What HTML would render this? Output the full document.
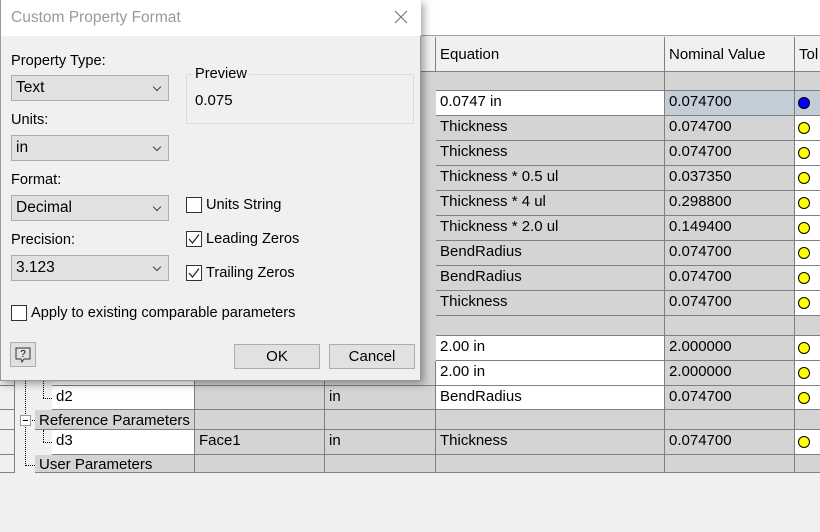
<!DOCTYPE html>
<html><head><meta charset="utf-8"><style>
*{margin:0;padding:0;box-sizing:border-box}
body{width:820px;height:532px;position:relative;overflow:hidden;background:#f0f0f0;font-family:"Liberation Sans",sans-serif;font-size:15px;color:#000}
.a{position:absolute}
.c{position:absolute;border-right:1px solid #808080;border-bottom:1px solid #808080;background:#d4d4d4;padding-left:4px;line-height:22px;white-space:nowrap;overflow:hidden}
.w{background:#fff}
.dot{position:absolute;width:12px;height:12px;border-radius:50%;border:1px solid #000;background:#ffff00}
.lab{position:absolute;font-size:14.6px}
.cb{position:absolute;left:10px;width:158px;height:26px;background:#e1e1e1;border:1px solid #adadad;padding-left:4px;line-height:24px;font-size:15.5px}
.cb:after{content:"";position:absolute;right:8px;top:8px;width:5px;height:5px;border-right:1px solid #444;border-bottom:1px solid #444;transform:rotate(45deg)}
.chk{position:absolute;width:16px;height:16px;border:1px solid #333;background:#fff}
.btn{position:absolute;height:25px;background:#e1e1e1;border:1px solid #adadad;text-align:center;line-height:23px;font-size:15px}
</style></head><body>
<div class="a" style="left:0;top:0;width:820px;height:36px;background:#fff;border-bottom:1px solid #a0a0a0"></div>
<div class="a" style="left:0;top:37px;width:820px;height:436px;background:#d4d4d4"></div>
<div class="c" style="left:0;top:37px;width:436px;height:35px;background:#f0f0f0"></div>
<div class="c" style="left:436px;top:37px;width:229px;height:35px;background:#f0f0f0;line-height:36px">Equation</div>
<div class="c" style="left:665px;top:37px;width:130px;height:35px;background:#f0f0f0;line-height:36px">Nominal Value</div>
<div class="c" style="left:795px;top:37px;width:40px;height:35px;background:#f0f0f0;line-height:36px">Tol</div>
<div class="c" style="left:436px;top:72px;width:229px;height:19px"></div>
<div class="c" style="left:665px;top:72px;width:130px;height:19px"></div>
<div class="c" style="left:795px;top:72px;width:40px;height:19px"></div>

<div class="c w" style="left:436px;top:91px;width:229px;height:25px">0.0747 in</div>
<div class="c" style="left:665px;top:91px;width:130px;height:25px;background:#c3cdd8">0.074700</div>
<div class="c" style="left:795px;top:91px;width:40px;height:25px;background:#c3cdd8"></div>
<div class="dot" style="left:798px;top:97px;background:#0000ff"></div>

<div class="c" style="left:436px;top:116px;width:229px;height:25px">Thickness</div><div class="c" style="left:665px;top:116px;width:130px;height:25px">0.074700</div><div class="c w" style="left:795px;top:116px;width:40px;height:25px"></div><div class="dot" style="left:798px;top:122px"></div>
<div class="c" style="left:436px;top:141px;width:229px;height:25px">Thickness</div><div class="c" style="left:665px;top:141px;width:130px;height:25px">0.074700</div><div class="c w" style="left:795px;top:141px;width:40px;height:25px"></div><div class="dot" style="left:798px;top:147px"></div>
<div class="c" style="left:436px;top:166px;width:229px;height:25px">Thickness * 0.5 ul</div><div class="c" style="left:665px;top:166px;width:130px;height:25px">0.037350</div><div class="c w" style="left:795px;top:166px;width:40px;height:25px"></div><div class="dot" style="left:798px;top:172px"></div>
<div class="c" style="left:436px;top:191px;width:229px;height:25px">Thickness * 4 ul</div><div class="c" style="left:665px;top:191px;width:130px;height:25px">0.298800</div><div class="c w" style="left:795px;top:191px;width:40px;height:25px"></div><div class="dot" style="left:798px;top:197px"></div>
<div class="c" style="left:436px;top:216px;width:229px;height:25px">Thickness * 2.0 ul</div><div class="c" style="left:665px;top:216px;width:130px;height:25px">0.149400</div><div class="c w" style="left:795px;top:216px;width:40px;height:25px"></div><div class="dot" style="left:798px;top:222px"></div>
<div class="c" style="left:436px;top:241px;width:229px;height:25px">BendRadius</div><div class="c" style="left:665px;top:241px;width:130px;height:25px">0.074700</div><div class="c w" style="left:795px;top:241px;width:40px;height:25px"></div><div class="dot" style="left:798px;top:247px"></div>
<div class="c" style="left:436px;top:266px;width:229px;height:25px">BendRadius</div><div class="c" style="left:665px;top:266px;width:130px;height:25px">0.074700</div><div class="c w" style="left:795px;top:266px;width:40px;height:25px"></div><div class="dot" style="left:798px;top:272px"></div>
<div class="c" style="left:436px;top:291px;width:229px;height:25px">Thickness</div><div class="c" style="left:665px;top:291px;width:130px;height:25px">0.074700</div><div class="c w" style="left:795px;top:291px;width:40px;height:25px"></div><div class="dot" style="left:798px;top:297px"></div>
<div class="c" style="left:436px;top:316px;width:229px;height:20px"></div><div class="c" style="left:665px;top:316px;width:130px;height:20px"></div><div class="c" style="left:795px;top:316px;width:40px;height:20px"></div>
<div class="c w" style="left:436px;top:336px;width:229px;height:25px">2.00 in</div><div class="c" style="left:665px;top:336px;width:130px;height:25px">2.000000</div><div class="c w" style="left:795px;top:336px;width:40px;height:25px"></div><div class="dot" style="left:798px;top:342px"></div>
<div class="c w" style="left:436px;top:361px;width:229px;height:25px">2.00 in</div><div class="c" style="left:665px;top:361px;width:130px;height:25px">2.000000</div><div class="c w" style="left:795px;top:361px;width:40px;height:25px"></div><div class="dot" style="left:798px;top:367px"></div>

<div class="c" style="left:0;top:361px;width:15px;height:25px;background:#f0f0f0"></div>
<div class="c" style="left:0;top:386px;width:15px;height:24px;background:#f0f0f0"></div>
<div class="c" style="left:0;top:410px;width:15px;height:20px;background:#f0f0f0"></div>
<div class="c" style="left:0;top:430px;width:15px;height:25px;background:#f0f0f0"></div>
<div class="c" style="left:0;top:455px;width:15px;height:18px;background:#f0f0f0"></div>
<div class="a" style="left:15px;top:361px;width:37px;height:112px;background:#f0f0f0"></div>
<div class="c w" style="left:52px;top:361px;width:143px;height:25px"></div>
<div class="c" style="left:195px;top:361px;width:130px;height:25px"></div>
<div class="c" style="left:325px;top:361px;width:111px;height:25px"></div>
<div class="c w" style="left:52px;top:386px;width:143px;height:24px">d2</div>
<div class="c" style="left:195px;top:386px;width:130px;height:24px"></div>
<div class="c" style="left:325px;top:386px;width:111px;height:24px">in</div>
<div class="c w" style="left:436px;top:386px;width:229px;height:24px">BendRadius</div><div class="c" style="left:665px;top:386px;width:130px;height:24px">0.074700</div><div class="c w" style="left:795px;top:386px;width:40px;height:24px"></div><div class="dot" style="left:798px;top:392px"></div>
<div class="c" style="left:35px;top:410px;width:160px;height:20px;line-height:22px">Reference Parameters</div>
<div class="c" style="left:195px;top:410px;width:130px;height:20px"></div>
<div class="c" style="left:325px;top:410px;width:111px;height:20px"></div>
<div class="c" style="left:436px;top:410px;width:229px;height:20px"></div><div class="c" style="left:665px;top:410px;width:130px;height:20px"></div><div class="c" style="left:795px;top:410px;width:40px;height:20px"></div>
<div class="c w" style="left:52px;top:430px;width:143px;height:25px">d3</div>
<div class="c" style="left:195px;top:430px;width:130px;height:25px">Face1</div>
<div class="c" style="left:325px;top:430px;width:111px;height:25px">in</div>
<div class="c" style="left:436px;top:430px;width:229px;height:25px">Thickness</div><div class="c" style="left:665px;top:430px;width:130px;height:25px">0.074700</div><div class="c w" style="left:795px;top:430px;width:40px;height:25px"></div><div class="dot" style="left:798px;top:436px"></div>
<div class="c" style="left:35px;top:455px;width:160px;height:18px;line-height:20px">User Parameters</div>
<div class="c" style="left:195px;top:455px;width:130px;height:18px"></div>
<div class="c" style="left:325px;top:455px;width:111px;height:18px"></div>
<div class="c" style="left:436px;top:455px;width:229px;height:18px"></div><div class="c" style="left:665px;top:455px;width:130px;height:18px"></div><div class="c" style="left:795px;top:455px;width:40px;height:18px"></div>
<div class="a" style="left:25px;top:381px;height:85px;border-left:1px dotted #000"></div>
<div class="a" style="left:25px;top:465px;width:10px;border-top:1px dotted #000"></div>
<div class="a" style="left:30px;top:420px;width:5px;border-top:1px dotted #000"></div>
<div class="a" style="left:20px;top:415px;width:11px;height:11px;border:1px solid #999;background:#fff"></div>
<div class="a" style="left:23px;top:420px;width:5px;border-top:1px solid #000"></div>
<div class="a" style="left:43px;top:381px;height:17px;border-left:1px dotted #000"></div>
<div class="a" style="left:43px;top:398px;width:9px;border-top:1px dotted #000"></div>
<div class="a" style="left:43px;top:430px;height:12px;border-left:1px dotted #000"></div>
<div class="a" style="left:43px;top:442px;width:9px;border-top:1px dotted #000"></div>

<div class="a" style="left:0;top:0;width:421px;height:381px;background:#f0f0f0;border:1px solid #999;border-top:none;box-shadow:3px 3px 8px rgba(0,0,0,0.35)">
<div class="a" style="left:0;top:0;width:420px;height:36px;background:#fff"></div>
<div class="a" style="left:10px;top:9px;font-size:15.5px;color:#9a9a9a">Custom Property Format</div>
<svg class="a" style="left:393px;top:10px" width="14" height="14"><path d="M1 1L13 13M13 1L1 13" stroke="#777" stroke-width="1.2"/></svg>
<div class="lab" style="left:10px;top:53px">Property Type:</div>
<div class="cb" style="top:75px">Text</div>
<div class="lab" style="left:10px;top:112px">Units:</div>
<div class="cb" style="top:135px">in</div>
<div class="lab" style="left:10px;top:172px">Format:</div>
<div class="cb" style="top:195px">Decimal</div>
<div class="lab" style="left:10px;top:232px">Precision:</div>
<div class="cb" style="top:255px">3.123</div>
<div class="a" style="left:185px;top:74px;width:228px;height:50px;border:1px solid #dcdcdc"></div>
<div class="lab" style="left:192px;top:66px;background:#f0f0f0;padding:0 2px">Preview</div>
<div class="lab" style="left:194px;top:92px;font-size:15px">0.075</div>
<div class="chk" style="left:185px;top:197px"></div><div class="lab" style="left:205px;top:197px">Units String</div>
<div class="chk" style="left:185px;top:231px"><svg width="14" height="14" style="position:absolute;left:0;top:0"><path d="M2 7L5.5 11L12 2.5" stroke="#222" fill="none" stroke-width="1.2"/></svg></div><div class="lab" style="left:205px;top:231px">Leading Zeros</div>
<div class="chk" style="left:185px;top:265px"><svg width="14" height="14" style="position:absolute;left:0;top:0"><path d="M2 7L5.5 11L12 2.5" stroke="#222" fill="none" stroke-width="1.2"/></svg></div><div class="lab" style="left:205px;top:265px">Trailing Zeros</div>
<div class="chk" style="left:10px;top:305px"></div><div class="lab" style="left:30px;top:305px">Apply to existing comparable parameters</div>
<div class="btn" style="left:9px;top:342px;width:26px"><svg width="24" height="23" style="position:absolute;left:0;top:0"><path d="M5 5H19V16H13L11 19L10 16H5Z" fill="none" stroke="#333"/><text x="12" y="14" text-anchor="middle" font-size="10" font-family="Liberation Sans">?</text></svg></div>
<div class="btn" style="left:233px;top:344px;width:86px">OK</div>
<div class="btn" style="left:328px;top:344px;width:86px">Cancel</div>
</div>
</body></html>
